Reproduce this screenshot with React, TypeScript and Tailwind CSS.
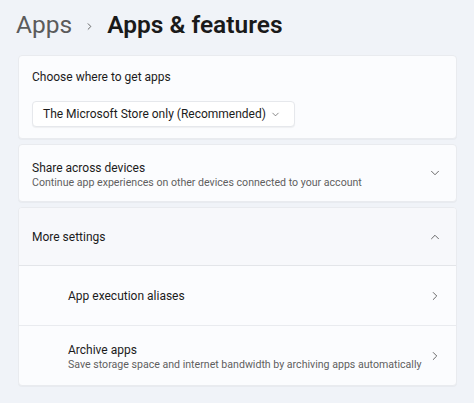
import { ChevronDown, ChevronRight, ChevronUp } from "lucide-react";

const font = { fontFamily: 'Roboto, "Noto Sans", sans-serif' };

function Chevron({ dir }: { dir: "down" | "up" | "right" }) {
  const cls = "h-[14px] w-[14px] text-[#4a4a4a]";
  if (dir === "down") return <ChevronDown className={cls} strokeWidth={1.4} />;
  if (dir === "up") return <ChevronUp className={cls} strokeWidth={1.4} />;
  return <ChevronRight className={cls} strokeWidth={1.4} />;
}

export default function App() {
  return (
    <div
      className="h-[403px] w-[474px] overflow-hidden bg-[#f0f3f8] text-[#1b1b1b]"
      style={font}
    >
      {/* breadcrumb title */}
      <div className="flex h-[50px] items-center pl-[16px]">
        <span className="text-[24.5px] leading-none text-[#5b5b5b]">Apps</span>
        <ChevronRight className="mx-[12px] mt-[2px] h-[11px] w-[11px] text-[#5b5b5b]" strokeWidth={2} />
        <span className="text-[24.5px] font-semibold leading-none text-[#1a1a1a]">
          Apps &amp; features
        </span>
      </div>

      <div className="ml-[18px] mr-[17px] mt-[5px] flex flex-col gap-[5px]">
        {/* card 1 */}
        <div className="h-[84px] rounded-[4px] border border-[#e9ebef] bg-[#fbfcfe] px-[13px] pt-[12px] shadow-[0_1px_0_rgba(0,0,0,0.03)]">
          <div className="text-[12px] leading-[18px]">Choose where to get apps</div>
          <div className="mt-[15px] flex h-[26px] w-[263px] items-center justify-between rounded-[4px] border border-[#e6e8ec] bg-white pl-[10px] pr-[13px] shadow-[0_1px_1px_rgba(0,0,0,0.05)]">
            <span className="whitespace-nowrap text-[12px]">The Microsoft Store only (Recommended)</span>
            <ChevronDown className="h-[11px] w-[11px] text-[#555]" strokeWidth={1.5} />
          </div>
        </div>

        {/* card 2 */}
        <div className="flex h-[58px] items-center justify-between rounded-[4px] border border-[#e9ebef] bg-[#fbfcfe] pl-[13px] pr-[14px] shadow-[0_1px_0_rgba(0,0,0,0.03)]">
          <div className="flex flex-col pt-[3px]">
            <span className="text-[12px] leading-[16px]">Share across devices</span>
            <span className="whitespace-nowrap text-[10.6px] leading-[14px] text-[#5f5f5f]">
              Continue app experiences on other devices connected to your account
            </span>
          </div>
          <Chevron dir="down" />
        </div>

        {/* card 3 */}
        <div className="overflow-hidden rounded-[4px] border border-[#e9ebef] bg-[#fbfcfe] shadow-[0_1px_0_rgba(0,0,0,0.03)]">
          <div className="flex h-[57px] items-center justify-between bg-[#f7f8fb] pl-[13px] pr-[14px]">
            <span className="text-[12px]">More settings</span>
            <Chevron dir="up" />
          </div>
          <div className="flex h-[60px] items-center justify-between border-t border-[#e3e5e9] pl-[49px] pr-[14px]">
            <span className="text-[12px]">App execution aliases</span>
            <Chevron dir="right" />
          </div>
          <div className="flex h-[60px] items-center justify-between border-t border-[#e9ebef] pl-[49px] pr-[14px]">
            <div className="flex flex-col pt-[2px]">
              <span className="text-[12px] leading-[16px]">Archive apps</span>
              <span className="whitespace-nowrap text-[10.6px] leading-[14px] text-[#5f5f5f]">
                Save storage space and internet bandwidth by archiving apps automatically
              </span>
            </div>
            <Chevron dir="right" />
          </div>
        </div>
      </div>
    </div>
  );
}
